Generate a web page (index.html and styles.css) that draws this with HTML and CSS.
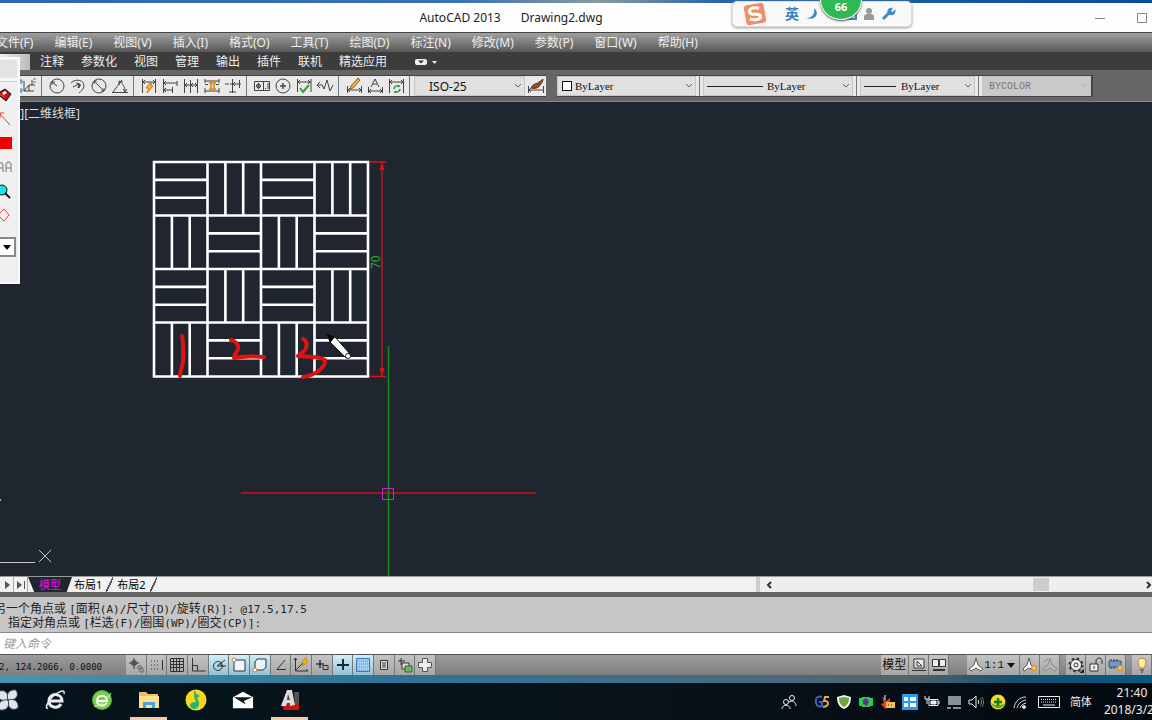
FILE: index.html
```
<!DOCTYPE html>
<html lang="zh-CN">
    <head>
        <meta charset="UTF-8">
        <title>AutoCAD 2013 - Drawing2.dwg</title>
        <meta name="viewport" content="width=device-width, initial-scale=1.0">
        <link rel="stylesheet" href="styles.css">
    </head>
    <body>
        <div class="desktop-edge"></div>

        <header class="titlebar">
            <span></span>
            <h1><span>AutoCAD 2013</span><span>Drawing2.dwg</span></h1>
            <div class="window-buttons">
                <button aria-label="最小化"><svg width="12" height="12"><path d="M1 6.500h10"/></svg></button>
                <button aria-label="最大化"><svg width="12" height="12"><path d="M1.500 1.500h9v9h-9z"/></svg></button>
            </div>
        </header>

        <nav class="menubar">
            <button>文件(F)</button>
            <button>编辑(E)</button>
            <button>视图(V)</button>
            <button>插入(I)</button>
            <button>格式(O)</button>
            <button>工具(T)</button>
            <button>绘图(D)</button>
            <button>标注(N)</button>
            <button>修改(M)</button>
            <button>参数(P)</button>
            <button>窗口(W)</button>
            <button>帮助(H)</button>
        </nav>

        <nav class="ribbon">
            <button class="current" aria-label="常用"></button>
            <button>注释</button>
            <button>参数化</button>
            <button>视图</button>
            <button>管理</button>
            <button>输出</button>
            <button>插件</button>
            <button>联机</button>
            <button>精选应用</button>
            <button class="ribbon-toggle" aria-label="最小化功能区">
                <svg width="24" height="8"><rect x="1" y="1" width="12" height="6" rx="2" fill="#eee"/><path d="M4 2.500h6l-3 3z" fill="#333"/><path d="M18 3h5l-2.500 3z" fill="#eee"/></svg>
            </button>
        </nav>

        <div class="toolbars">
            <div class="toolbar dim-tools">
                <button aria-label="坐标标注"><svg viewBox="0 0 18 18"><path d="M5 4v10h10M5 14l5-6h6M10 8v6M13 3v5"/><path d="M1 3h2v3H1zM1 12h2v3H1zM14 2h3M14 5h3" stroke="#3f7fb5"/></svg></button>
                <i class="sep"></i>
                <button aria-label="半径"><svg viewBox="0 0 18 18"><circle cx="9" cy="9" r="7"/><path d="M9 9L4 5M4 8V5h3"/></svg></button>
                <button aria-label="折弯"><svg viewBox="0 0 18 18"><path d="M2 6c5-5 13-3 13 3 0 3-3 5-5 7M4 10l6-3-1 4 3-3M7 6l4 1-1 4"/></svg></button>
                <button aria-label="直径"><svg viewBox="0 0 18 18"><circle cx="9" cy="9" r="7"/><path d="M4 4l10 10M4 7V4h3M11 14h3v-3"/></svg></button>
                <button aria-label="角度"><svg viewBox="0 0 18 18"><path d="M1 15.500h16M2 15L11 3M8 5c4 1 6 5 6 10M8 8V4l4 1M12 12l2 3 2-3"/></svg></button>
                <i class="sep"></i>
                <button aria-label="快速标注"><svg viewBox="0 0 18 18"><path d="M2.500 2v14M15.500 2v14M2 5h14M5 3L3 5l2 2M13 3l2 2-2 2"/><path d="M10 6l-4 5h3l-2 5 6-7h-3l2-3z" fill="#ffc332" stroke="#c47a00"/></svg></button>
                <button aria-label="基线"><svg viewBox="0 0 18 18"><path d="M2.500 2v14M2 6h14M2 13h9M11.500 10v6M16 4v5M5 4L3 6l2 2M5 11l-2 2 2 2"/></svg></button>
                <button aria-label="连续"><svg viewBox="0 0 18 18"><path d="M2.500 2v14M8.500 3v13M15.500 2v14M2 8h13M5 6L3 8l2 2M11 6L9 8l2 2M13 6l2 2-2 2"/></svg></button>
                <button aria-label="等距标注"><svg viewBox="0 0 18 18"><path d="M2 2v4M16 2v4M2 4h14M2 11v5M16 11v5M2 14h14M2 7.500h3M13 7.500h3"/><path d="M6 6h7M6 12h7M8 6v6M11 6v6" stroke="#e39a17" stroke-width="2"/></svg></button>
                <button aria-label="折断标注"><svg viewBox="0 0 18 18"><path d="M8.500 2v14M1 7h4M6 7h11M15.500 3v8M11 5l-2 2 2 2M5 15h7"/></svg></button>
                <i class="sep"></i>
                <button aria-label="公差"><svg viewBox="0 0 18 18"><path d="M1.500 4.500h15v9h-15zM10.500 4v9M5.500 6v6M3 9h5M15 6v6M12.500 11v1"/><circle cx="5.500" cy="9" r="2"/></svg></button>
                <button aria-label="圆心标记"><svg viewBox="0 0 18 18"><circle cx="9" cy="9" r="7"/><path d="M9 6v6M6 9h6" stroke-width="1.500"/></svg></button>
                <button aria-label="检验"><svg viewBox="0 0 18 18"><path d="M2.500 2v13M16 2v13M2 5h14M5 3L3 5l2 2M13 3l2 2-2 2"/><path d="M5 11l3 4 6-7" stroke="#2fa236" stroke-width="2"/></svg></button>
                <button aria-label="折弯线性"><svg viewBox="0 0 18 18"><path d="M1 8h5l2 4 3-9 3 11 3-6M4 5L1 8l3 3"/></svg></button>
                <i class="sep"></i>
                <button aria-label="编辑标注"><svg viewBox="0 0 18 18"><path d="M2.500 9v7M16.500 9v7M2 13h14M5 11l-2 2 2 2M14 11l2 2-2 2"/><path d="M6 9l7-8 2 2-7 8-3 1z" fill="#f0b04b" stroke="#9a5b16"/></svg></button>
                <button aria-label="编辑标注文字"><svg viewBox="0 0 18 18"><path d="M2.500 10v6M16.500 10v6M2 14h14M5 12l-2 2 2 2M14 12l2 2-2 2M5 10l4-8 4 8M7 7h4"/></svg></button>
                <button aria-label="标注更新"><svg viewBox="0 0 18 18"><path d="M2.500 2v14M16.500 2v14M2 5h14M5 3L3 5l2 2M14 3l2 2-2 2"/><path d="M7 12c0-3 4-4 5-2V8M13 12c0 3-4 4-5 2v2" stroke="#2a8f35" stroke-width="1.500"/></svg></button>
                <i class="sep"></i>
                <label class="combo combo-style">
                    <select aria-label="标注样式"><option>ISO-25</option></select>
                    <svg class="chevron" width="8" height="6"><path d="M1 1l3 3 3-3"/></svg>
                </label>
                <button aria-label="标注样式管理"><svg viewBox="0 0 18 18"><path d="M1.500 9v7M16.500 9v7M1 13h15M4 11l-2 2 2 2"/><path d="M4 11c2-4 4-4 7-5l5-4c0 2-1 4-3 6-1 3-5 4-9 3z" fill="#8a5030" stroke="#653317"/></svg></button>
            </div>
            <div class="toolbar prop-tools">
                <label class="combo combo-color">
                    <i class="swatch"></i>
                    <select aria-label="颜色"><option>ByLayer</option></select>
                    <svg class="chevron" width="8" height="6"><path d="M1 1l3 3 3-3"/></svg>
                </label>
                <i class="sep"></i>
                <label class="combo combo-linetype">
                    <i class="line"></i>
                    <select aria-label="线型"><option>ByLayer</option></select>
                    <svg class="chevron" width="8" height="6"><path d="M1 1l3 3 3-3"/></svg>
                </label>
                <i class="sep"></i>
                <label class="combo combo-weight">
                    <i class="line"></i>
                    <select aria-label="线宽"><option>ByLayer</option></select>
                    <svg class="chevron" width="8" height="6"><path d="M1 1l3 3 3-3"/></svg>
                </label>
                <i class="sep"></i>
                <label class="combo combo-plot">
                    <select aria-label="打印样式" disabled><option>BYCOLOR</option></select>
                    <svg class="chevron" width="8" height="6"><path d="M1 1l3 3 3-3"/></svg>
                </label>
            </div>
        </div>

        <main class="canvas">
            <p class="view-label">.][二维线框]</p>
            <svg class="drawing">
                <defs>
                    <path id="h" d="M0 17.900h53.500M0 35.700h53.500"/>
                    <path id="v" d="M17.900 0v53.500M35.700 0v53.500"/>
                </defs>

                <!-- Parquet pattern -->
                <g transform="translate(154 60)" fill="none" stroke="#fff" stroke-width="2.600">
                    <path d="M0 0h214v214.500H0zM53.500 0v214M107 0v214M160.500 0v214M0 53.500h214M0 107h214M0 160.500h214"/>
                    <use href="#h"/>
                    <use href="#v" x="53.500"/>
                    <use href="#h" x="107"/>
                    <use href="#v" x="160.500"/>
                    <use href="#v" y="53.500"/>
                    <use href="#h" x="53.500" y="53.500"/>
                    <use href="#v" x="107" y="53.500"/>
                    <use href="#h" x="160.500" y="53.500"/>
                    <use href="#h" y="107"/>
                    <use href="#v" x="53.500" y="107"/>
                    <use href="#h" x="107" y="107"/>
                    <use href="#v" x="160.500" y="107"/>
                    <use href="#v" y="160.500"/>
                    <use href="#h" x="53.500" y="160.500"/>
                    <use href="#v" x="107" y="160.500"/>
                    <use href="#h" x="160.500" y="160.500"/>
                </g>

                <!-- Dimension -->
                <path d="M370 60h16M370 274.500h16M382 60v214" stroke="#e0101a" stroke-width="1.300"/>
                <path d="M382 60l2.500 8h-5zM382 274l2.500-8h-5z" fill="#e01010"/>
                <text x="380" y="167" transform="rotate(-90 380 167)" class="dim-text">70</text>

                <!-- Crosshair -->
                <path d="M241 391h295" stroke="#d00d18" stroke-width="1.300"/>
                <path d="M388.500 244v500" stroke="#128c1c" stroke-width="1.500"/>
                <path d="M382.500 386.500h11v11h-11z" fill="none" stroke="#c030b8"/>

                <!-- UCS -->
                <path d="M0 460.500h35M39 448l12 12M51 448l-12 12M0 399l1-2" stroke="#c8c8c8" fill="none"/>

                <!-- Handwriting -->
                <g fill="none" stroke="#e01212" stroke-width="4" stroke-linecap="round" stroke-linejoin="round">
                    <path d="M182 234c2 8 1 18 1 26-1 6-3 9-3 14"/>
                    <path d="M231 238c5 1 8 5 7 9-1 3-4 6-4 9 8-2 18-2 30-1"/>
                    <path d="M303 237c5 2 4 8 2 11-2 3-5 4-7 6 8 1 21 0 27 4 1 8-12 16-22 17"/>
                </g>

                <!-- Pen -->
                <path d="M327 232l8 3 15 17-4 4-16-16z" fill="#fff" stroke="#111"/>
                <path d="M327 232l8 3-5 6z" fill="#000"/>
                <circle cx="348" cy="254" r="2.500" fill="#fff" stroke="#222"/>
            </svg>
        </main>

        <div class="layout-tabs">
            <button class="step" aria-label="下一个"><svg width="12" height="12"><path d="M4 2l5 4-5 4z"/></svg></button>
            <button class="step" aria-label="最后一个"><svg width="12" height="12"><path d="M2 2l5 4-5 4zM9 2h1v8H9z"/></svg></button>
            <button class="tab current">模型</button>
            <button class="tab">布局1</button>
            <i class="slash"></i>
            <button class="tab">布局2</button>
            <i class="slash"></i>
            <div class="hscroll">
                <button aria-label="向左"><svg width="6" height="8"><path d="M5 1L2 4l3 3"/></svg></button>
                <i class="thumb"></i>
                <button aria-label="向右"><svg width="6" height="8"><path d="M1 1l3 3-3 3"/></svg></button>
            </div>
        </div>

        <section class="command">
            <div class="history">
                <p>另一个角点或 <code>[</code>面积<code>(A)/</code>尺寸<code>(D)/</code>旋转<code>(R)]: @17.5,17.5</code></p>
                <p class="second">指定对角点或 <code>[</code>栏选<code>(F)/</code>圈围<code>(WP)/</code>圈交<code>(CP)]:</code></p>
            </div>
            <input type="text" placeholder="键入命令" aria-label="键入命令">
        </section>

        <footer class="statusbar">
            <output class="coords">2, 124.2066, 0.0000</output>
            <div class="modes">
                <button aria-label="推断约束"><svg viewBox="0 0 16 16"><path d="M6 1v11M1 6h10"/><path d="M4 4h4v4H4z"/><path d="M10 9h3v3h-3zM12 11h3v4h-3z" stroke="#667"/></svg></button>
                <button aria-label="捕捉"><svg viewBox="0 0 16 16"><path d="M2 4h9M2 8h9M2 12h9" stroke-dasharray="1 2"/><path d="M13.500 3v10"/></svg></button>
                <button aria-label="栅格"><svg viewBox="0 0 16 16"><path d="M1.500 1.500h13v13h-13zM4.500 1v13M7.500 1v13M10.500 1v13M1 4.500h13M1 7.500h13M1 10.500h13"/></svg></button>
                <button aria-label="正交"><svg viewBox="0 0 16 16"><path d="M2.500 1v13h13M2.500 8.500h5v5"/></svg></button>
                <button class="on" aria-label="极轴"><svg viewBox="0 0 16 16"><circle cx="7" cy="9" r="4.500"/><path d="M6 9l8-6M6 9h9M9 6l2 4"/></svg></button>
                <button class="on" aria-label="对象捕捉"><svg viewBox="0 0 16 16"><path d="M3 3h11v11H3z" fill="#eef7fc"/><circle cx="3" cy="3" r="2" fill="#fff" stroke="#d97b2b"/></svg></button>
                <button class="on" aria-label="三维对象捕捉"><svg viewBox="0 0 16 16"><path d="M5 2h9v8l-3 3H3V5z" fill="#e9f3fa"/><circle cx="3" cy="13" r="2" fill="#fff" stroke="#d97b2b"/></svg></button>
                <button aria-label="对象追踪"><svg viewBox="0 0 16 16"><path d="M12 3L4 12.500h9"/></svg></button>
                <button aria-label="动态 UCS"><svg viewBox="0 0 16 16"><path d="M2.500 1v13H15M3 13l8-8M1 3l1.500-2L4 3M13 12l2 2"/><path d="M12 1l-4 5h3l-1 3 5-5h-3l2-3z" fill="#ffb52e" stroke="#d48a12"/></svg></button>
                <button aria-label="动态输入"><svg viewBox="0 0 16 16"><path d="M6 3v8M2 7h8" stroke-width="1.500"/><path d="M9 8.500h5v4H9z"/></svg></button>
                <button class="on" aria-label="线宽"><svg viewBox="0 0 16 16"><path d="M8 2v11M2 8h12" stroke-width="2" stroke="#152c38"/></svg></button>
                <button class="on" aria-label="透明度"><svg viewBox="0 0 16 16"><path d="M1.500 1.500h13v13h-13z" fill="#a7d1f2" stroke="#3779b6"/><path d="M2 4h12M2 7h12M2 10h12M2 13h12" stroke="#4f8ecb" stroke-dasharray="1 1"/></svg></button>
                <button aria-label="快捷特性"><svg viewBox="0 0 16 16"><path d="M4.500 3.500h7v9h-7z" fill="#ddd"/><path d="M6 6h4M6 8h4M6 10h4"/></svg></button>
                <button aria-label="选择循环"><svg viewBox="0 0 16 16"><path d="M4 1v7M1 4h7"/><path d="M5 6h7v6H5z" fill="#ddd"/><path d="M8 9h7v6H8z" fill="#69b56a" stroke="#2e6e30"/></svg></button>
                <button aria-label="注释监视器"><svg viewBox="0 0 16 16"><path d="M5.500 1.500h5v4h4v5h-4v4h-5v-4h-4v-5h4z" fill="#eee" stroke="#555"/></svg></button>
            </div>
            <div class="status-group space">
                <button class="text">模型</button>
                <button aria-label="图形"><svg viewBox="0 0 16 16"><path d="M3 2h10v9H3z" fill="#eee"/><path d="M6 9V4l5 5zM1 13.500h14"/></svg></button>
                <button aria-label="快速查看布局"><svg viewBox="0 0 16 16"><path d="M1.500 2.500h6v7h-6zM8.500 2.500h6v7h-6z" fill="#eee"/><path d="M2 13h12" stroke-width="2"/></svg></button>
            </div>
            <div class="status-group scale">
                <button class="text">
                    <svg viewBox="0 0 16 16"><path d="M8 1l2 7 5 4-2 2-5-3-5 3-2-2 5-4z" fill="#fff" stroke="#555"/></svg>
                    <span>1:1</span>
                    <svg class="drop" viewBox="0 0 8 6"><path d="M0 1h8L4 6z"/></svg>
                </button>
                <button aria-label="注释可见性"><svg viewBox="0 0 16 16"><path d="M7 1l2 7 4 4-2 1-4-2-5 3-1-2 4-4z" fill="#fff" stroke="#555"/><circle cx="12" cy="11" r="2.500" fill="#ffc14f" stroke="#d38b1b"/></svg></button>
                <button aria-label="自动缩放"><svg viewBox="0 0 16 16"><path d="M8 1l2 7 5 4-2 2-5-3-5 3-2-2 5-4zM2 5l4-3" fill="#bbb" stroke="#888"/></svg></button>
            </div>
            <div class="status-group tools">
                <button aria-label="切换工作空间"><svg viewBox="0 0 16 16"><circle cx="8" cy="8" r="6.500" stroke-width="2" stroke-dasharray="2.500 2.600"/><circle cx="8" cy="8" r="5.500" fill="#eee"/><circle cx="8" cy="8" r="2"/><path d="M16 12v4h-4z" fill="#111"/></svg></button>
                <button aria-label="锁定"><svg viewBox="0 0 16 16"><path d="M2 7h8v7H2z" fill="#eee"/><path d="M8 7V4c0-4 6-4 6 0v3M6 9v3"/></svg></button>
                <button aria-label="硬件加速"><svg viewBox="0 0 16 16"><path d="M1 4h12v6H1z" fill="#6d9bd0" stroke="#456"/><path d="M3 10v2M6 10v2M3 4V2M6 4V2M9 4V2"/><circle cx="12" cy="11" r="2.500" fill="#ffc14f" stroke="#d38b1b"/></svg></button>
            </div>
            <div class="status-group bulb">
                <button aria-label="隔离对象"><svg viewBox="0 0 16 16"><path d="M6 11c0-2-2-3-2-6 0-5 8-5 8 0 0 3-2 4-2 6z" fill="#ffeaa0" stroke="#b98a2c"/><path d="M6 13h4M7 15h2"/></svg></button>
            </div>
        </footer>
        <div class="desktop-edge lower"></div>

        <footer class="taskbar">
            <div class="apps">
                <button aria-label="开始"><svg viewBox="0 0 22 22"><g fill="#dfe5ec" stroke="#30404c"><path d="M11 11C5 13 0 10 1 3c6-4 11 1 10 8z"/><path d="M11 11c-2-6 1-11 8-10 4 6-1 11-8 10z"/><path d="M11 11c6-2 11 1 10 8-6 4-11-1-10-8z"/><path d="M11 11c2 6-1 11-8 10-4-6 1-11 8-10z"/></g></svg></button>
                <button aria-label="Internet Explorer"><svg viewBox="0 0 22 22"><path d="M5 12h13c0-8-13-9-13 0 0 7 9 8 12 3" fill="none" stroke="#e6ebef" stroke-width="3"/><path d="M4 19C0 21 4 10 12 5c6-4 9-4 8 0" fill="none" stroke="#e6ebef" stroke-width="1.500"/></svg></button>
                <button aria-label="浏览器"><svg viewBox="0 0 22 22"><circle cx="11" cy="11" r="10" fill="#52b63e"/><circle cx="11" cy="11" r="9" fill="#7ccd50"/><path d="M6 12h10c0-7-10-7-10 0 0 5 7 6 10 2" fill="none" stroke="#fff" stroke-width="2"/><path d="M3 17c2 2 13-5 17-13" fill="none" stroke="#d7f2c8"/></svg></button>
                <button class="open" aria-label="文件资源管理器"><svg viewBox="0 0 22 22"><path d="M1 3h7l2 2h10v14H1z" fill="#e9c45e"/><path d="M1 7h20v12H1z" fill="#fbe08d"/><path d="M5 19v-6h12v6h-3v-3H8v3z" fill="#45a5d6"/></svg></button>
                <button aria-label="QQ音乐"><svg viewBox="0 0 22 22"><circle cx="11" cy="11" r="10.500" fill="#fbd51c"/><path d="M9 1c1 3 4 5 6 6l-3 2c4 5 2 11-3 11-6-1-5-8 2-7C9 10 9 6 9 1z" fill="#2bb46a"/></svg></button>
                <button aria-label="邮件"><svg viewBox="0 0 24 22"><path d="M1 8l11-6 11 6v12H1z" fill="#fff"/><path d="M2 8h20l-9 4 2 4z" fill="#10181d"/></svg></button>
                <button class="open" aria-label="AutoCAD"><svg viewBox="0 0 22 22"><path d="M2 14l18-1v8H5z" fill="#c81414"/><path d="M2 17L8 1h5l3 15-5 1v-3H8l-1 3z" fill="#dcdcdc"/><path d="M9 5l-1 6h3z" fill="#444"/><path d="M15 3h5v11h-4z" fill="#555"/></svg></button>
            </div>
            <div class="tray">
                <svg viewBox="0 0 16 16" fill="none" stroke="#eee"><circle cx="11" cy="4" r="2.500"/><circle cx="5" cy="8" r="2.500"/><path d="M1 15c0-5 8-5 8 0M8 8c3-2 7 0 7 4"/></svg>
                <svg viewBox="0 0 16 16" fill="none" stroke-width="2"><path d="M8 3C3 1 1 5 2 9c1 4 4 4 6 3V8H5" stroke="#3c62c8"/><path d="M15 3h-4l-1 4c5-1 6 5-1 6" stroke="#f0a04e"/></svg>
                <svg viewBox="0 0 16 16"><path d="M8 1l7 2c0 6-2 10-7 12C3 13 1 9 1 3z" fill="#eef4e8"/><path d="M8 3l5 1c0 5-2 7-5 9-3-2-5-4-5-9z" fill="#69a83c"/></svg>
                <svg viewBox="0 0 16 16"><path d="M1 4h3v8H1zM12 4h3v8h-3zM4 3h8v10H4z" fill="#1fd052"/><path d="M5 6l3-2 3 3-2 5-4-2z" fill="#7b2596"/></svg>
                <svg viewBox="0 0 16 16"><path d="M2 2l4 5 4-3v7l-5 4-4-5 3-1z" fill="#e83922"/><path d="M6 8h9v6H6z" fill="#f6c24b"/><path d="M8 11h1M11 11h1" stroke="#333"/><path d="M5 1v5" stroke="#fff"/></svg>
                <svg viewBox="0 0 16 16"><path d="M0 0h16v16H0z" fill="#2c9af0"/><path d="M2 3h4v4H2zM2 9h4v4H2zM8 3h6v4H8zM8 9h6v4H8z" fill="#fff"/></svg>
                <svg viewBox="0 0 16 16" fill="none" stroke="#eee"><path d="M5 5.500h9v6H5zM15 7v3M1 2v3h4V2M3 5v5"/><path d="M7 7h5v3H7z" fill="#eee"/></svg>
                <svg viewBox="0 0 16 16"><path d="M2 2h13v9H2zM1 13h4v2H1zM7 13h8v2H7z" fill="#8c9094"/></svg>
                <svg viewBox="0 0 16 16" fill="none" stroke="#eee"><path d="M1 6h3l4-4v12l-4-4H1zM10 6c1 1 1 3 0 4"/><path d="M12 4c2 2 2 6 0 8M14 3c2 3 2 7 0 10" stroke="#777"/></svg>
                <svg viewBox="0 0 16 16"><circle cx="8" cy="8" r="7.500" fill="#f6d929"/><path d="M1 9c3 7 12 7 14 0-4 3-9 3-14 0z" fill="#57b32c"/><path d="M8 4v8M4 8h8" stroke="#187a21" stroke-width="2.500"/></svg>
                <svg viewBox="0 0 16 16" fill="none" stroke="#ddd"><path d="M2 14C3 7 8 3 14 3M5 14c1-4 4-7 9-8M8 14c1-3 3-4 6-5" /><circle cx="12" cy="13" r="1.500" fill="#ddd"/></svg>
                <svg class="keyboard" viewBox="0 0 22 14" fill="none" stroke="#eee"><path d="M.5 1.500h21v11H.5z"/><path d="M3 4.500h16M3 7h16" stroke-dasharray="1 1"/><path d="M5 10h12"/></svg>
                <button class="lang">简体</button>
                <div class="clock"><time>21:40</time><time>2018/3/2</time></div>
            </div>
        </footer>

        <!-- Floating windows -->
        <aside class="palette">
            <div class="grip"></div>
            <button aria-label="填充"><svg width="14" height="16"><path d="M0 5l5-3 6 5-5 7-6-5z" fill="#b01818" stroke="#111"/><path d="M2 6l3-2 2 2-3 2z" fill="#fff"/><path d="M0 7l5 3" stroke="#ff2b2b" stroke-width="2"/></svg></button>
            <button aria-label="箭头"><svg width="14" height="16"><path d="M10 14L0 3M0 7V2h4" fill="none" stroke="#d23a3a"/></svg></button>
            <button aria-label="颜色"><svg width="14" height="16"><path d="M0 2h12v12H0z" fill="#f00000"/></svg></button>
            <button aria-label="文字"><svg width="14" height="16"><path d="M0 4c3-1 3 2 3 9M0 9h3M6 13V5l2-2h1l2 2v8M6 9h5" fill="none" stroke="#999" stroke-width="1.500"/></svg></button>
            <button aria-label="放大"><svg width="14" height="16"><circle cx="2" cy="7" r="5" fill="#1fe0e8" stroke="#111"/><path d="M5 10l5 5" stroke="#111" stroke-width="2"/></svg></button>
            <button aria-label="橡皮"><svg width="14" height="16"><path d="M0 6l4-4 5 6-5 6-4-4" fill="none" stroke="#e04848"/></svg></button>
            <button class="drop" aria-label="线宽"><svg width="8" height="5"><path d="M0 0h8L4 5z"/></svg></button>
        </aside>

        <aside class="ime">
            <svg width="26" height="24" viewBox="0 0 26 24"><g transform="rotate(-10 13 12)"><rect x="3" y="2" width="20" height="20" rx="3" fill="#ef8f68"/><path d="M18 7c-4-2-10-2-10 2 0 5 10 2 10 6 0 4-7 3-11 1" fill="none" stroke="#fff" stroke-width="3"/></g></svg>
            <button>英</button>
            <svg width="14" height="14" viewBox="0 0 14 14"><path d="M9 1c6 5 2 13-8 10 6 0 9-4 8-10z" fill="#4488c4"/></svg>
            <svg class="ime-kbd" width="18" height="14" viewBox="0 0 18 14"><path d="M1 2h16v10H1zM4 9h10" fill="none" stroke="#4488c4" stroke-width="2"/></svg>
            <svg width="12" height="14" viewBox="0 0 12 14"><circle cx="6" cy="4" r="3" fill="#999"/><path d="M1 13V9c1-3 9-3 10 0v4z" fill="#999"/></svg>
            <svg width="15" height="14" viewBox="0 0 15 14"><path d="M2 12l6-6" stroke="#4488c4" stroke-width="3"/><path d="M12 1l-2 3 2 1 2-3c2 5-3 8-7 5C5 3 8 0 12 1z" fill="#4488c4"/></svg>
            <span class="score">66</span>
        </aside>
    </body>
</html>
```
FILE: styles.css
```
* { box-sizing: border-box; }

body {
    position: relative;
    display: flex;
    flex-direction: column;
    height: 100vh;
    margin: 0;
    overflow: hidden;
    font-family: "Noto Sans", "Noto Sans CJK SC", sans-serif;
    font-size: 12px;
    line-height: 16px;
    background-color: #666;
}

body > * { flex: none; }

h1, p { margin: 0; }

svg { display: block; flex: none; }

button {
    display: flex;
    align-items: center;
    justify-content: center;
    flex: none;
    margin: 0;
    padding: 0;
    border: 0;
    background: none;
    color: inherit;
    font: inherit;
    white-space: nowrap;
}

.desktop-edge {
    height: 3px;
    background: linear-gradient(90deg, #2c69b0, #3973b4 40%, #8a9aa0 52%, #2867a8 62%, #0c4c94);
}

.desktop-edge.lower {
    height: 8px;
    background: linear-gradient(90deg, #4b93b2, #2e7397 35%, #496a7c 70%, #54666a 78%, #165274 88%, #075a82);
}

/* Title and menus */

.titlebar {
    display: grid;
    grid-template-columns: 1fr auto 1fr;
    align-items: center;
    height: 29px;
    padding: 0 4px 0 0;
    background-color: #fefefe;
}

.titlebar h1 {
    display: flex;
    gap: 20px;
    margin-right: 126px;
    font-size: 12px;
    font-weight: normal;
    color: #222;
}

.window-buttons {
    display: flex;
    justify-content: flex-end;
    gap: 30px;
    fill: none;
    stroke: #888;
}

.menubar {
    display: flex;
    align-items: center;
    gap: 21px;
    height: 20px;
    margin: 0;
    border-top: 1px solid #444;
    background: linear-gradient(#a0a0a0, #575757);
    color: #eee;
}

.menubar button:first-child { margin-left: -4px; }

.ribbon {
    display: flex;
    align-items: center;
    gap: 17px;
    height: 18px;
    padding-top: 2px;
    background-color: #3c3c3c;
    color: #eee;
}

.ribbon .current {
    width: 30px;
    height: 16px;
    margin-right: -7px;
    background: linear-gradient(90deg, #eee, #bbb);
}

.ribbon-toggle { margin-left: 10px; }

/* Toolbars */

.toolbars {
    display: flex;
    gap: 11px;
    padding: 5px 0 4px 17px;
    border-bottom: 1px solid #8a8a8a;
    background-color: #666;
}

.toolbar {
    display: flex;
    height: 22px;
    border: solid #444;
    border-width: 1px 0;
    background-color: #e9e9e9;
}

.dim-tools button { width: 21px; }

.dim-tools button svg {
    width: 18px;
    height: 18px;
    fill: none;
    stroke: #444;
}

.sep {
    width: 8px;
    border-left: 3px solid #e9e9e9;
    background: linear-gradient(90deg, #777 1px, #e9e9e9 1px);
}

.prop-tools {
    border-right: 2px solid #444;
}

.prop-tools .sep { width: 7px; }

.combo {
    display: grid;
    align-items: center;
    background-color: #e0e0e0;
}

.combo > * { grid-area: 1 / 1; }

.combo select {
    width: 100%;
    height: 20px;
    margin: 0;
    padding: 0 18px 0 17px;
    border: 1px solid #c6c6c6;
    border-radius: 0;
    background: none;
    appearance: none;
    color: #111;
    font-family: "Liberation Serif", serif;
    font-size: 11px;
}

.chevron {
    justify-self: end;
    margin-right: 3px;
    fill: none;
    stroke: #666;
    pointer-events: none;
}

.combo-style { width: 111px; }
.combo-color { width: 139px; }
.combo-linetype { width: 150px; }
.combo-weight { width: 115px; }
.combo-plot { width: 109px; }

.combo-style select {
    font-family: "Noto Sans", sans-serif;
    font-size: 12px;
    padding-left: 14px;
}

.swatch {
    width: 10px;
    height: 10px;
    margin-left: 5px;
    border: 1px solid #111;
    background-color: #fff;
}

.line {
    width: 56px;
    height: 1px;
    margin-left: 4px;
    background-color: #222;
}

.combo-linetype select { padding-left: 63px; }
.combo-weight .line { width: 32px; }
.combo-weight select { padding-left: 40px; }

.combo-plot { background-color: #c9c9c9; }
.combo-plot .chevron { stroke: #aaa; }

.combo-plot select {
    padding-left: 6px;
    color: #777;
    font-family: "Liberation Mono", monospace;
    font-size: 10px;
    opacity: 1;
}

/* Drawing area */

.canvas {
    position: relative;
    flex: 1;
    min-height: 0;
    background-color: #1f262f;
}

.view-label {
    padding: 4px 0 0 17px;
    color: #ddd;
}

.drawing {
    position: absolute;
    inset: 0;
    width: 100%;
    height: 100%;
}

.dim-text {
    fill: #22b02c;
    font-family: "Noto Sans", sans-serif;
    font-size: 12px;
}

/* Layout tabs */

.layout-tabs {
    display: flex;
    height: 21px;
    border-top: 1px solid #999;
    border-bottom: 5px solid #666;
    background-color: #f1f1f1;
}

.step {
    width: 14px;
    border-right: 1px solid #aaa;
    fill: #555;
}

.tab {
    padding: 0 4px;
    font-size: 11px;
}

.tab.current {
    width: 44px;
    margin-right: -2px;
    background-color: #1f262f;
    clip-path: polygon(0 0, 100% 0, 88% 100%, 14% 100%);
    color: #e012e0;
}

.slash {
    width: 7px;
    background: linear-gradient(115deg, transparent 45%, #555 45%, #555 58%, transparent 58%);
}

.hscroll {
    display: flex;
    align-items: center;
    width: 396px;
    margin-left: auto;
    padding-left: 6px;
    border-left: 4px solid #ccc;
    background-color: #eee;
    fill: none;
    stroke: #333;
    stroke-width: 2px;
}

.thumb {
    width: 16px;
    height: 13px;
    margin: 0 97px 0 auto;
    background-color: #cdcdcd;
}

/* Command line */

.history {
    height: 35px;
    padding-top: 5px;
    overflow: hidden;
    background-color: #c6c6c6;
    color: #222;
    line-height: 14px;
    white-space: nowrap;
}

.history p { height: 14px; margin-left: -6px; }

.history .second { margin-left: 8px; }

.history code {
    font-family: "DejaVu Sans Mono", monospace;
    font-size: 11px;
}

.command input {
    display: block;
    width: 100%;
    height: 22px;
    padding: 0 3px;
    border: 0;
    border-top: 1px solid #888;
    background-color: #fff;
    font: inherit;
}

.command input::placeholder {
    color: #999;
    font-style: italic;
    opacity: 1;
}

/* Status bar */

.statusbar {
    display: flex;
    height: 21px;
    border-top: 1px solid #555;
    background: linear-gradient(#9c9c9c, #7f7f7f);
    color: #111;
}

.coords {
    display: flex;
    align-items: center;
    justify-content: flex-end;
    width: 126px;
    padding: 3px 24px 0 0;
    font-family: "DejaVu Sans Mono", monospace;
    font-size: 9px;
    white-space: pre;
}

.modes {
    display: flex;
    width: 310px;
}

.modes button { flex: 1; }

.statusbar button {
    border-right: 1px solid #777;
    background: linear-gradient(#c4c4c4, #a6a6a6);
}

.statusbar button.on { background: linear-gradient(#d5edf5, #8fc3d6); }

.statusbar svg {
    width: 16px;
    height: 16px;
    fill: none;
    stroke: #333;
}

.status-group { display: flex; }

.status-group button { width: 20px; }

.status-group .text {
    width: auto;
    padding: 0 2px 0 1px;
}

.space { margin-left: auto; }

.scale { margin-left: 18px; }

.scale .text {
    padding: 0 4px 0 1px;
    font-family: "Liberation Mono", monospace;
    font-size: 11px;
}

.statusbar svg.drop {
    width: 8px;
    height: 6px;
    margin-left: 3px;
    fill: #111;
    stroke: none;
}

.tools { margin-left: 6px; }

.bulb { margin-left: 6px; }

/* Taskbar */

.taskbar {
    display: flex;
    justify-content: space-between;
    height: 37px;
    background: linear-gradient(90deg, #04131b, #08131a 50%, #030a10);
    color: #eee;
}

.apps { display: flex; gap: 10px; margin-left: -11px; }

.apps button { width: 37px; border-bottom: 3px solid transparent; }

.apps button.open { border-bottom-color: #f3cba9; }

.apps svg { width: 22px; height: 22px; }

.tray {
    display: flex;
    align-items: center;
    gap: 6px;
    margin-right: -2px;
}

.tray svg { width: 16px; height: 16px; }

.tray svg:first-child { margin-right: 11px; }

.tray .keyboard { width: 22px; height: 14px; margin: 0 4px; }

.lang { font-size: 11px; }

.clock {
    display: grid;
    gap: 1px;
    margin-left: 6px;
    justify-items: center;
    font-size: 12px;
}

.clock time:first-child { margin-left: 6px; }

/* Screen pen palette, partly off the left edge */

.palette {
    position: absolute;
    top: 57px;
    left: 0;
    display: grid;
    justify-items: start;
    align-content: start;
    width: 20px;
    height: 227px;
    border: solid #fafafa;
    border-width: 2px 2px 2px 0;
    background-color: #f0f0f0;
}

.palette button { height: 24px; }

.palette .grip {
    width: 17px;
    height: 18px;
    margin: 1px 0 5px;
    background-color: #e3e3e3;
    box-shadow: 0 3px 0 #f8f8f8, 0 4px 0 #ccc;
}

.palette .drop {
    width: 16px;
    height: 20px;
    margin-top: 10px;
    border: 2px solid #888;
    border-left: 0;
    background-color: #fff;
}

/* Input method bar */

.ime {
    position: absolute;
    top: 1px;
    left: 732px;
    display: flex;
    align-items: center;
    gap: 6px;
    width: 180px;
    height: 26px;
    padding: 0 9px;
    border: 1px solid #ddd;
    border-radius: 5px;
    background-color: #f8f8f8;
    box-shadow: 0 1px 3px #999;
}

.ime button {
    margin-left: 11px;
    color: #3e80bd;
    font-size: 14px;
    font-weight: bold;
}

.ime-kbd { margin: 0 0 0 14px; }

.score {
    position: absolute;
    top: -22px;
    left: 87px;
    width: 42px;
    height: 40px;
    padding-top: 18px;
    border: 1px solid #fff;
    border-radius: 50%;
    background-color: #2fb955;
    box-shadow: 0 1px 2px #555;
    color: #fff;
    font-size: 11px;
    font-weight: bold;
    text-align: center;
}
```
